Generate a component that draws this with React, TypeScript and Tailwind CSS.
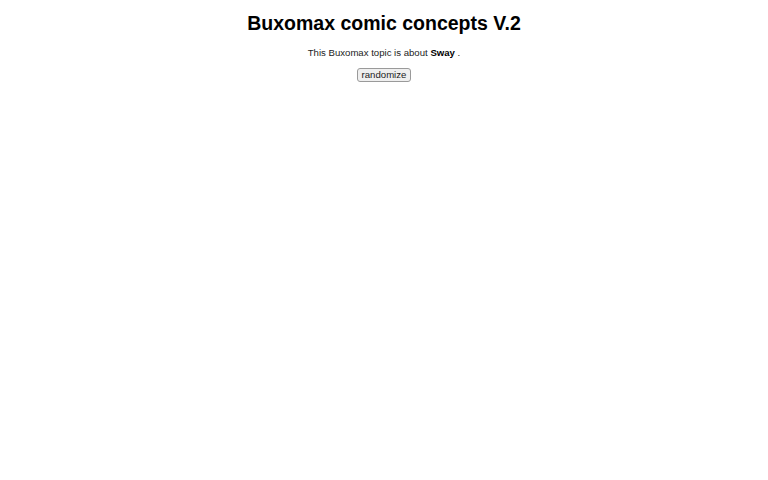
export default function App() {
  return (
    <div className="min-h-screen bg-white text-black text-center font-['Liberation_Sans',Arial,sans-serif]">
      <h1 className="pt-[12px] text-[19.5px] leading-[22px] font-bold">Buxomax comic concepts V.2</h1>
      <p className="mt-[13px] text-[9.6px] leading-[12px] text-[#222]">
        This Buxomax topic is about <b className="text-black">Sway</b> .
      </p>
      <button className="mt-[9px] px-[4px] py-0 text-[9.6px] leading-[12px] text-[#222] bg-[#efefef] border border-[#9a9a9a] rounded-[3px]">
        randomize
      </button>
    </div>
  );
}
